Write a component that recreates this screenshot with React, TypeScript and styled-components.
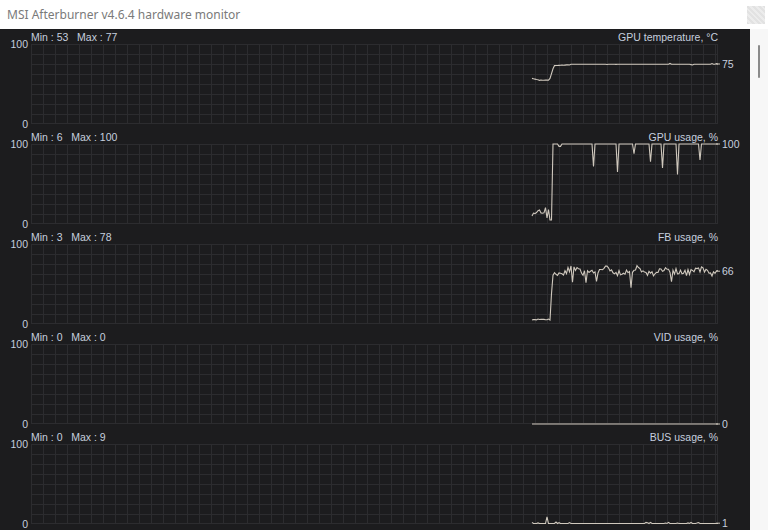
import React from "react";
import styled, { createGlobalStyle } from "styled-components";

const Global = createGlobalStyle`
  html, body { margin: 0; padding: 0; background: #ffffff; }
  body { width: 768px; height: 530px; overflow: hidden; }
`;

const Window = styled.div`
  width: 768px;
  height: 530px;
  display: flex;
  flex-direction: column;
  background: #f3f3f3;
`;

const TitleBar = styled.div`
  height: 29px;
  flex: none;
  display: flex;
  align-items: center;
  justify-content: space-between;
  padding: 0 3px 0 7px;
  background: #ffffff;
  font-family: "Noto Sans", "Open Sans", sans-serif;
  font-size: 12px;
  color: #7a7a7a;
  box-sizing: border-box;
`;

const CornerBox = styled.div`
  width: 18px;
  height: 18px;
  background: repeating-linear-gradient(45deg, #e2e2e2 0 2px, #ececec 2px 4px);
`;

const Body = styled.div`
  flex: 1;
  display: flex;
  min-height: 0;
`;

const Monitor = styled.div`
  width: 750px;
  background: #1c1c1e;
  display: flex;
  flex-direction: column;
  overflow: hidden;
  font-family: "Liberation Sans", Arial, sans-serif;
  font-size: 10.5px;
  color: #c6cfdf;
`;

const ScrollTrack = styled.div`
  flex: 1;
  background: #f7f7f7;
  display: flex;
  justify-content: center;
  padding-top: 16px;
`;

const Thumb = styled.div`
  width: 2px;
  height: 33px;
  background: #8a8a8a;
  border-radius: 1px;
`;

const Panel = styled.div`
  height: 100px;
  flex: none;
  display: flex;
  flex-direction: column;
`;

const Header = styled.div`
  height: 15px;
  display: flex;
  justify-content: space-between;
  align-items: center;
  padding: 0 32px 0 31px;
  line-height: 12px;
`;

const Row = styled.div`
  height: 80px;
  display: grid;
  grid-template-columns: 31px 687px 1fr;
`;

const Axis = styled.div`
  display: flex;
  flex-direction: column;
  justify-content: space-between;
  align-items: flex-end;
  padding-right: 3px;
  margin: -6px 0 -6px;
  line-height: 12px;
`;

const ValueCol = styled.div`
  position: relative;
`;

const Value = styled.span`
  position: absolute;
  left: 4px;
  line-height: 12px;
`;

const PlotSvg = styled.svg`
  display: block;
  width: 687px;
  height: 80px;
  overflow: visible;
`;

function rng(seed: number) {
  let s = seed;
  return () => {
    s = (s * 16807) % 2147483647;
    return (s - 1) / 2147483646;
  };
}

const W = 687;
const yOf = (v: number) => 80 - (v / 100) * 80;

type Pt = [number, number];

function build(fn: (x: number, r: () => number) => number, seed: number): Pt[] {
  const r = rng(seed);
  const pts: Pt[] = [];
  for (let x = 501; x <= W; x += 1.5) pts.push([x, fn(x, r)]);
  return pts;
}

const temp = build((x, r) => {
  if (x < 508) return 57 - (x - 501) * 0.3;
  if (x < 519) return 54.5 + r() * 0.6;
  if (x < 523) return 57 + (x - 519) * 4;
  if (x < 540) return 72.5 + (x - 523) * 0.08 + r() * 0.6;
  return 74.8 + (r() < 0.1 ? (r() - 0.5) * 2 : 0);
}, 7);

const gpuDips: Record<number, number> = { 562: 72, 586: 65, 603: 88, 619: 78, 632: 70, 647: 62, 669: 80 };
const gpu = build((x, r) => {
  if (x < 516) return 10 + r() * 8 + (x - 501) * 0.3;
  if (x < 519) return 4 + r() * 25;
  if (x < 521) return 5;
  const k = Object.keys(gpuDips).map(Number).find((d) => Math.abs(d - x) < 1);
  if (k !== undefined) return gpuDips[k];
  return r() < 0.04 ? 97 : 100;
}, 3);

const fb = build((x, r) => {
  if (x < 519) return 5 + r() * 1.5;
  if (x < 522) return 5 + (x - 519) * 22;
  const base = 66 + Math.sin(x / 5) * 3 + (r() - 0.5) * 8;
  if (r() < 0.06) return 45 + r() * 10;
  return Math.min(73, base);
}, 11);

const vid = build(() => 0, 1);

const bus = build((x, r) => {
  if (Math.abs(x - 516) < 1) return 9;
  return r() < 0.15 ? 1 + r() * 1.5 : 0.6;
}, 5);

function toPath(pts: Pt[]) {
  return pts.map(([x, v], i) => `${i ? "L" : "M"}${x.toFixed(1)} ${yOf(v).toFixed(1)}`).join(" ");
}

function Grid() {
  const lines: React.ReactNode[] = [];
  for (let x = 0.5; x <= W; x += 12) lines.push(<line key={"v" + x} x1={x} y1={0} x2={x} y2={80} />);
  lines.push(<line key="vr" x1={W - 0.5} y1={0} x2={W - 0.5} y2={80} />);
  for (let y = 0.5; y <= 80; y += 10) lines.push(<line key={"h" + y} x1={0} y1={y} x2={W} y2={y} />);
  lines.push(<line key="hb" x1={0} y1={79.5} x2={W} y2={79.5} />);
  return <g stroke="#2c2c2f" strokeWidth={1}>{lines}</g>;
}

type Data = { min: number; max: number; title: string; pts: Pt[]; value: string; vy: number };

const panels: Data[] = [
  { min: 53, max: 77, title: "GPU temperature, °C", pts: temp, value: "75", vy: 75 },
  { min: 6, max: 100, title: "GPU usage, %", pts: gpu, value: "100", vy: 100 },
  { min: 3, max: 78, title: "FB usage, %", pts: fb, value: "66", vy: 66 },
  { min: 0, max: 0, title: "VID usage, %", pts: vid, value: "0", vy: 0 },
  { min: 0, max: 9, title: "BUS usage, %", pts: bus, value: "1", vy: 1 },
];

function GraphPanel({ d }: { d: Data }) {
  return (
    <Panel>
      <Header>
        <span>Min : {d.min}&nbsp;&nbsp; Max : {d.max}</span>
        <span>{d.title}</span>
      </Header>
      <Row>
        <Axis>
          <span>100</span>
          <span>0</span>
        </Axis>
        <PlotSvg viewBox="0 0 687 80">
          <Grid />
          <path d={toPath(d.pts)} fill="none" stroke="#cfc8bd" strokeWidth={1.1} />
          <line x1={W - 2} y1={yOf(d.vy)} x2={W + 2} y2={yOf(d.vy)} stroke="#cfc8bd" />
        </PlotSvg>
        <ValueCol>
          <Value style={{ top: yOf(d.vy) - 6 }}>{d.value}</Value>
        </ValueCol>
      </Row>
    </Panel>
  );
}

export default function App() {
  return (
    <Window>
      <Global />
      <TitleBar>
        <span>MSI Afterburner v4.6.4 hardware monitor</span>
        <CornerBox />
      </TitleBar>
      <Body>
        <Monitor>
          {panels.map((d) => (
            <GraphPanel key={d.title} d={d} />
          ))}
        </Monitor>
        <ScrollTrack>
          <Thumb />
        </ScrollTrack>
      </Body>
    </Window>
  );
}
